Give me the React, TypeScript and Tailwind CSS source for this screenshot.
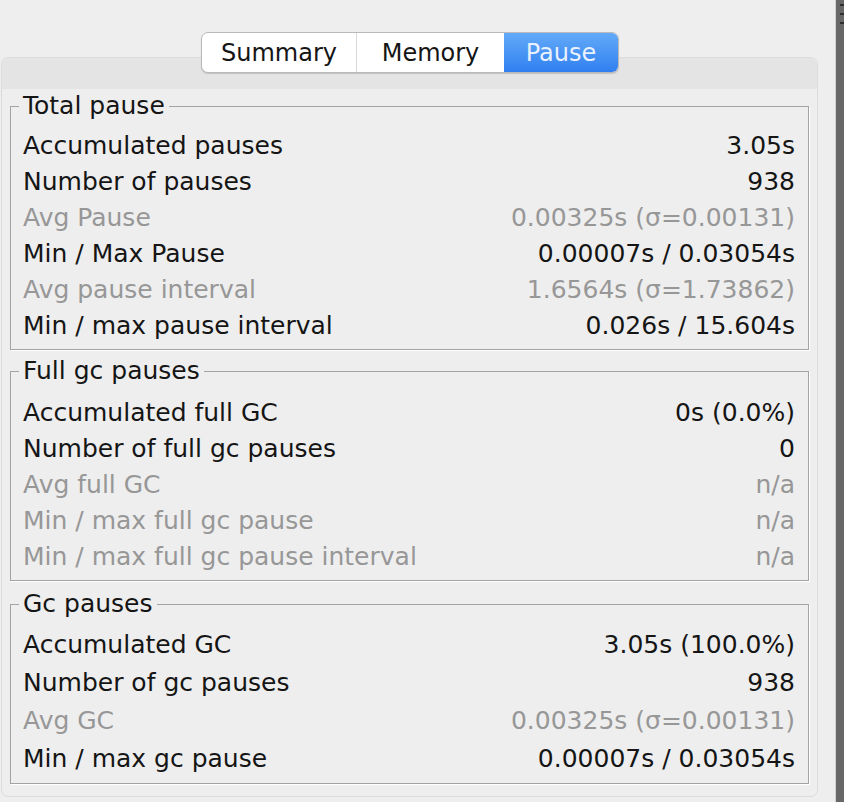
type Row = { label: string; value: string; dim?: boolean };

const totalPause: Row[] = [
  { label: "Accumulated pauses", value: "3.05s" },
  { label: "Number of pauses", value: "938" },
  { label: "Avg Pause", value: "0.00325s (σ=0.00131)", dim: true },
  { label: "Min / Max Pause", value: "0.00007s / 0.03054s" },
  { label: "Avg pause interval", value: "1.6564s (σ=1.73862)", dim: true },
  { label: "Min / max pause interval", value: "0.026s / 15.604s" },
];

const fullGc: Row[] = [
  { label: "Accumulated full GC", value: "0s (0.0%)" },
  { label: "Number of full gc pauses", value: "0" },
  { label: "Avg full GC", value: "n/a", dim: true },
  { label: "Min / max full gc pause", value: "n/a", dim: true },
  { label: "Min / max full gc pause interval", value: "n/a", dim: true },
];

const gcPauses: Row[] = [
  { label: "Accumulated GC", value: "3.05s (100.0%)" },
  { label: "Number of gc pauses", value: "938" },
  { label: "Avg GC", value: "0.00325s (σ=0.00131)", dim: true },
  { label: "Min / max gc pause", value: "0.00007s / 0.03054s" },
];

function Group({
  title,
  rows,
  rowClass,
  className,
}: {
  title: string;
  rows: Row[];
  rowClass: string;
  className: string;
}) {
  return (
    <fieldset
      className={`border border-[#a3a3a3] pl-[8px] pr-[9px] pb-[5px] shadow-[1px_1px_0_#ffffff] ${className}`}
    >
      <legend className="px-1 leading-[24px] text-[#151515]">{title}</legend>
      {rows.map((r) => (
        <div
          key={r.label}
          className={`flex items-center justify-between px-1 ${rowClass} ${
            r.dim ? "text-[#979797]" : "text-[#151515]"
          }`}
        >
          <span>{r.label}</span>
          <span>{r.value}</span>
        </div>
      ))}
    </fieldset>
  );
}

export default function App() {
  return (
    <div
      className="flex h-[802px] w-[844px] overflow-hidden bg-[#eeeeee] text-[25px]"
      style={{ fontFamily: '"DejaVu Sans", Verdana, sans-serif' }}
    >
      <div className="flex w-[835px] flex-col pt-[32px]">
        <div className="relative z-10 flex h-[41px] self-start ml-[201px] overflow-hidden rounded-[7px] border border-[#b9b9b9] bg-white text-[24px] shadow-[0_1px_1px_rgba(0,0,0,0.15)]">
          <div className="flex w-[155px] items-center justify-center border-r border-[#d8d8d8] text-[#151515]">
            Summary
          </div>
          <div className="flex w-[147px] items-center justify-center text-[#151515]">
            Memory
          </div>
          <div className="flex w-[114px] items-center justify-center bg-gradient-to-b from-[#63aaf8] to-[#2f7ff0] text-[#e8f1fd]">
            Pause
          </div>
        </div>

        <div className="-mt-[16px] ml-[1px] w-[817px] rounded-[7px] border border-[#dcdcdc] bg-[#eeeeee] pb-[12px]">
          <div className="h-[31px] rounded-t-[7px] bg-[#e4e4e4]" />
          <div className="px-[8px]">
            <Group title="Total pause" rows={totalPause} rowClass="h-[36px]" className="mt-[5px] pt-[10px]" />
            <Group title="Full gc pauses" rows={fullGc} rowClass="h-[36px]" className="mt-[9px] pt-[12px]" />
            <Group title="Gc pauses" rows={gcPauses} rowClass="h-[38px]" className="mt-[11px] pt-[10px]" />
          </div>
        </div>
      </div>
      <div className="w-[1px] bg-[#d2d2d2]" />
      <div className="relative flex-1 bg-[#676767]">
        <div className="absolute left-[4px] top-[4px] h-[2px] w-[4px] bg-[#2e2e2e]" />
        <div className="absolute left-[4px] top-[13px] h-[2px] w-[4px] bg-[#2e2e2e]" />
        <div className="absolute left-[4px] top-[22px] h-[2px] w-[4px] bg-[#2e2e2e]" />
      </div>
    </div>
  );
}
